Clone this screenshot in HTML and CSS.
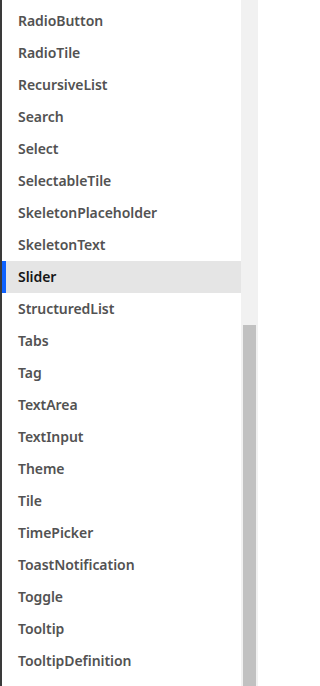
FILE: index.html
```html
<!DOCTYPE html>
<html>
<head>
<meta charset="utf-8">
<link rel="stylesheet" href="styles.css">
</head>
<body>
<div class="frame">
  <nav class="sidenav">
    <ul class="list">
      <li class="item"><a class="link">RadioButton</a></li>
      <li class="item"><a class="link">RadioTile</a></li>
      <li class="item"><a class="link">RecursiveList</a></li>
      <li class="item"><a class="link">Search</a></li>
      <li class="item"><a class="link">Select</a></li>
      <li class="item"><a class="link">SelectableTile</a></li>
      <li class="item"><a class="link">SkeletonPlaceholder</a></li>
      <li class="item"><a class="link">SkeletonText</a></li>
      <li class="item"><a class="link current">Slider</a></li>
      <li class="item"><a class="link">StructuredList</a></li>
      <li class="item"><a class="link">Tabs</a></li>
      <li class="item"><a class="link">Tag</a></li>
      <li class="item"><a class="link">TextArea</a></li>
      <li class="item"><a class="link">TextInput</a></li>
      <li class="item"><a class="link">Theme</a></li>
      <li class="item"><a class="link">Tile</a></li>
      <li class="item"><a class="link">TimePicker</a></li>
      <li class="item"><a class="link">ToastNotification</a></li>
      <li class="item"><a class="link">Toggle</a></li>
      <li class="item"><a class="link">Tooltip</a></li>
      <li class="item"><a class="link">TooltipDefinition</a></li>
    </ul>
  </nav>
  <div class="scrollbar">
    <div class="thumb"></div>
  </div>
</div>
</body>
</html>
```
FILE: styles.css
```css
html, body {
  margin: 0;
  padding: 0;
  height: 100%;
  overflow: hidden;
  background: #ffffff;
}
.frame {
  display: flex;
  width: 258px;
  height: 686px;
  overflow: hidden;
}
.sidenav {
  flex: 0 0 241px;
  border-left: 2px solid #3a3a3a;
  box-sizing: border-box;
  overflow: hidden;
  background: #ffffff;
}
.list {
  list-style: none;
  margin: 0;
  padding: 5px 0 0 0;
}
.item {
  height: 32px;
}
.link {
  display: flex;
  align-items: center;
  height: 32px;
  box-sizing: border-box;
  padding-left: 16px;
  padding-bottom: 1px;
  font-family: "Noto Sans", "Open Sans", sans-serif;
  font-weight: 600;
  font-size: 14px;
  letter-spacing: -0.05px;
  color: #525252;
  position: relative;
}
.link.current {
  background: #e5e5e5;
  color: #161616;
}
.link.current::before {
  content: "";
  position: absolute;
  left: 0;
  top: 0;
  bottom: 0;
  width: 4px;
  background: #0f62fe;
}
.scrollbar {
  flex: 0 0 17px;
  background: #f1f1f1;
  display: flex;
  flex-direction: column;
  padding: 0 2px;
  box-sizing: border-box;
}
.thumb {
  margin-top: 325px;
  flex: 1;
  background: #c1c1c1;
}
```
